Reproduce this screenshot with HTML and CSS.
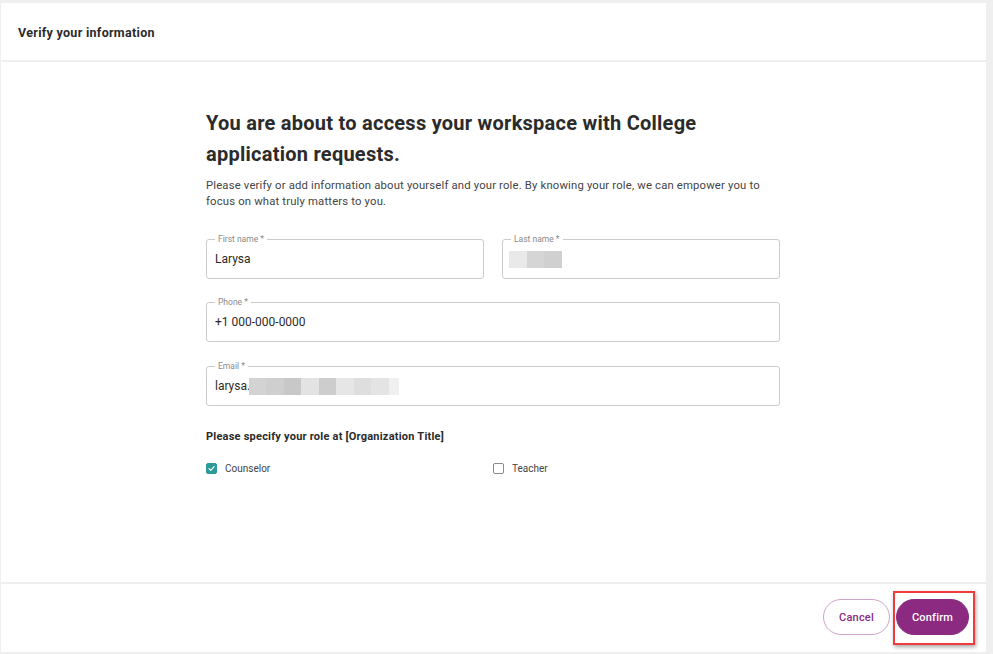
FILE: index.html
```html
<!DOCTYPE html>
<html lang="en">
<head>
<meta charset="utf-8">
<title>Verify your information</title>
<link rel="stylesheet" href="styles.css">
</head>
<body>
<div class="panel">
  <header class="panel-header">
    <h1 class="panel-title">Verify your information</h1>
  </header>
  <main class="panel-body">
    <div class="content">
      <h2 class="heading">You are about to access your workspace with College application requests.</h2>
      <p class="intro">Please verify or add information about yourself and your role. By knowing your role, we can empower you to focus on what truly matters to you.</p>
      <div class="row two">
        <div class="field">
          <span class="field-label">First name *</span>
          <span class="field-value">Larysa</span>
        </div>
        <div class="field">
          <span class="field-label">Last name *</span>
          <span class="field-value"><span class="blur b1"></span><span class="blur b2"></span><span class="blur b3"></span></span>
        </div>
      </div>
      <div class="row">
        <div class="field">
          <span class="field-label">Phone *</span>
          <span class="field-value">+1 000-000-0000</span>
        </div>
      </div>
      <div class="row email-row">
        <div class="field">
          <span class="field-label">Email *</span>
          <span class="field-value">larysa.<span class="blur e1"></span><span class="blur e2"></span><span class="blur e3"></span><span class="blur e4"></span><span class="blur e5"></span><span class="blur e6"></span><span class="blur e7"></span><span class="blur e8"></span><span class="blur e9"></span></span>
        </div>
      </div>
      <h3 class="role-title">Please specify your role at [Organization Title]</h3>
      <div class="roles">
        <label class="role">
          <span class="check checked">
            <svg viewBox="0 0 12 12" width="12" height="12"><path d="M2.6 6.2 L5 8.5 L9.5 3.6" fill="none" stroke="#fff" stroke-width="1.6" stroke-linecap="round" stroke-linejoin="round"/></svg>
          </span>
          Counselor
        </label>
        <label class="role">
          <span class="check"></span>
          Teacher
        </label>
      </div>
    </div>
  </main>
  <footer class="panel-footer">
    <button class="btn btn-outline">Cancel</button>
    <button class="btn btn-primary">Confirm<span class="highlight"></span></button>
  </footer>
</div>
</body>
</html>
```
FILE: styles.css
```css
* { box-sizing: border-box; }
html, body { margin: 0; padding: 0; }
body {
  background: #efefef;
  font-family: Roboto, "Liberation Sans", Arial, sans-serif;
  color: #222;
  width: 993px;
  height: 654px;
  overflow: hidden;
}
.panel {
  margin: 3px 0 0 1px;
  width: 985px;
  height: 649px;
  background: #fff;
  display: flex;
  flex-direction: column;
}
.panel-header {
  height: 59px;
  border-bottom: 2px solid #efefef;
  display: flex;
  align-items: center;
  padding-left: 17px;
  flex: none;
}
.panel-title {
  margin: 0;
  font-size: 12.5px;
  font-weight: 700;
  color: #2b2b2b;
  padding-top: 1px;
  letter-spacing: 0.3px;
}
.panel-body {
  flex: 1;
  display: flex;
  justify-content: center;
  padding-top: 46px;
}
.content {
  width: 574px;
  margin-left: -1px;
}
.heading {
  margin: 0;
  font-size: 20px;
  line-height: 31px;
  font-weight: 700;
  color: #2b2b2b;
  letter-spacing: 0.25px;
}
.intro {
  margin: 8px 0 0;
  font-size: 11.3px;
  line-height: 16px;
  color: #444;
  letter-spacing: 0.17px;
}
.row {
  display: flex;
  gap: 18px;
  margin-top: 23px;
}
.row.two { margin-top: 29px; }
.row.email-row { margin-top: 24px; }
.field {
  position: relative;
  flex: 1;
  height: 40px;
  border: 1px solid #cbcbcb;
  border-radius: 3px;
  display: flex;
  align-items: center;
  padding-left: 8px;
}
.field-label {
  position: absolute;
  top: -6px;
  left: 8px;
  padding: 0 3px;
  background: #fff;
  font-size: 8.5px;
  line-height: 10px;
  color: #8a8a8a;
}
.field-value {
  font-size: 12px;
  color: #2b2b2b;
  display: flex;
  align-items: center;
}
.blur {
  display: inline-block;
  height: 17px;
}
.b1 { width: 18px; background: #e9e9e9; margin-left: -2px; }
.b2 { width: 17px; background: #d5d5d5; }
.b3 { width: 18px; background: #d0d0d0; }
.e1 { width: 17px; background: #d3d3d3; margin-left: -1px; }
.e2 { width: 18px; background: #cfcfcf; }
.e3 { width: 17px; background: #c8c8c8; }
.e4 { width: 18px; background: #e3e3e3; }
.e5 { width: 17px; background: #cdcdcd; }
.e6 { width: 18px; background: #e6e6e6; }
.e7 { width: 17px; background: #dedede; }
.e8 { width: 18px; background: #e4e4e4; }
.e9 { width: 10px; background: #f0f0f0; }
.role-title {
  margin: 24px 0 0;
  font-size: 11px;
  line-height: 14px;
  font-weight: 700;
  color: #2b2b2b;
  letter-spacing: 0.22px;
}
.roles {
  display: grid;
  grid-template-columns: 287px 1fr;
  margin-top: 19px;
}
.role {
  display: flex;
  align-items: center;
  gap: 8px;
  font-size: 10px;
  color: #444;
}
.check {
  width: 11px;
  height: 11px;
  border: 1px solid #8a8a8a;
  border-radius: 2px;
  display: inline-flex;
  align-items: center;
  justify-content: center;
}
.check.checked {
  background: #2b9a98;
  border-color: #2b9a98;
}
.check svg { width: 11px; height: 11px; }
.panel-footer {
  height: 70px;
  border-top: 2px solid #efefef;
  display: flex;
  justify-content: flex-end;
  align-items: center;
  gap: 6px;
  padding-right: 17px;
  padding-bottom: 2px;
  flex: none;
}
.btn {
  height: 36px;
  border-radius: 18px;
  font-family: inherit;
  font-size: 11px;
  font-weight: 500;
  padding: 0;
  cursor: pointer;
  letter-spacing: 0.2px;
}
.btn-outline {
  width: 67px;
  background: #fff;
  border: 1px solid #cfa3c9;
  color: #8b2a80;
}
.btn-primary {
  position: relative;
  width: 73px;
  background: #8b2a80;
  border: 1px solid #8b2a80;
  color: #fff;
}
.highlight {
  position: absolute;
  left: -4px;
  top: -9px;
  right: -7px;
  bottom: -11px;
  border: 2px solid #ef3b3b;
  box-shadow: 1px 2px 4px rgba(0,0,0,0.35);
  pointer-events: none;
}
```
